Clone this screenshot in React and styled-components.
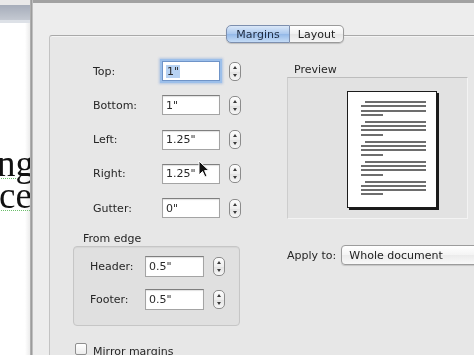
import React from "react";
import styled, { createGlobalStyle, css } from "styled-components";

const Global = createGlobalStyle`
  html, body { margin: 0; padding: 0; background: #ececec; }
  body { overflow: hidden; }
  * { box-sizing: border-box; }
`;

const Screen = styled.div`
  display: flex;
  width: 474px;
  height: 355px;
  overflow: hidden;
  font-family: "DejaVu Sans", "Liberation Sans", sans-serif;
  font-size: 11px;
  color: #262626;
  filter: blur(0.3px);
`;

const DocStrip = styled.div`
  width: 30px;
  flex: none;
  display: flex;
  flex-direction: column;
  background: #fff;
  overflow: hidden;
`;

const DocTop = styled.div`
  height: 5px;
  background: #e9e9e9;
`;

const DocToolbar = styled.div`
  height: 18px;
  background: linear-gradient(#a6adba, #c4c9d2);
  border-bottom: 3px solid #dde1e7;
`;

const DocBody = styled.div`
  flex: 1;
  padding-top: 125px;
  background: linear-gradient(to right, #fff 0, #fff 25px, #ececec 30px);
  font-family: "Liberation Serif", "Times New Roman", serif;
  font-size: 37px;
  line-height: 32px;
  color: #111;
`;

const DocLine = styled.div`
  white-space: nowrap;
  margin-left: ${(p) => p.$shift}px;
  span {
    text-decoration: underline dotted #6cbf6c;
    text-decoration-thickness: 1px;
    text-underline-offset: 2px;
  }
`;

const WindowEdge = styled.div`
  width: 3px;
  flex: none;
  background: linear-gradient(to right, #b9b9b9, #9c9c9c, #d2d2d2);
`;

const Dialog = styled.div`
  flex: 1;
  position: relative;
  background: #ededed;
  border-top: 3px solid #a2a2a2;
  padding: 32px 0 0 16px;
  overflow: hidden;
`;

const Panel = styled.div`
  position: relative;
  width: 470px;
  height: 340px;
  background: #e7e7e7;
  border: 1px solid #c3c3c3;
  border-top-color: #a9a9a9;
  border-radius: 3px;
  box-shadow: inset 0 1px 0 #f4f4f4;
`;

const TabBar = styled.div`
  position: absolute;
  top: -11px;
  left: 176px;
  display: flex;
  height: 18px;
  border-radius: 5px;
  box-shadow: 0 1px 1px rgba(0, 0, 0, 0.18);
`;

const Tab = styled.div`
  width: ${(p) => p.$w}px;
  display: flex;
  align-items: center;
  justify-content: center;
  font-size: 11px;
  border: 1px solid #9a9a9a;
  ${(p) =>
    p.$active
      ? css`
          background: linear-gradient(#dbe8f8, #a9c7ee 50%, #93b8e8 51%, #c5dcf6);
          border-color: #7d8fae;
          border-radius: 5px 0 0 5px;
          color: #1d2a40;
        `
      : css`
          background: linear-gradient(#ffffff, #f1f1f1 50%, #e6e6e6 51%, #f6f6f6);
          border-left: none;
          border-radius: 0 5px 5px 0;
          color: #222;
        `}
`;

const Columns = styled.div`
  display: flex;
`;

const LeftCol = styled.div`
  width: 237px;
  flex: none;
  padding: 25px 0 0 23px;
  display: flex;
  flex-direction: column;
`;

const FieldGrid = styled.div`
  display: grid;
  grid-template-columns: ${(p) => p.$cols};
  grid-auto-rows: ${(p) => p.$rowH}px;
  column-gap: 9px;
  row-gap: ${(p) => p.$gap}px;
  align-items: center;
  margin-left: ${(p) => p.$indent || 0}px;
`;

const Label = styled.div`
  white-space: nowrap;
  color: #262626;
`;

const Input = styled.div`
  height: 100%;
  display: flex;
  align-items: center;
  padding-left: 3px;
  background: #fff;
  border: 1px solid #a4a4a4;
  border-top-color: #7f7f7f;
  box-shadow: inset 0 1px 1px rgba(0, 0, 0, 0.12);
  color: #2a2a2a;
  ${(p) =>
    p.$focused &&
    css`
      border-color: #6f94c8;
      box-shadow: 0 0 0 2px #9cbfea, 0 0 2px 3px rgba(120, 160, 220, 0.45);
    `}
`;

const Selected = styled.span`
  background: #b7d2f2;
  padding: 0 1px;
`;

const StepperBox = styled.div`
  width: 12px;
  height: 19px;
  border: 1px solid #8c8c8c;
  border-radius: 5px;
  background: linear-gradient(#fdfdfd, #eeeeee 50%, #e2e2e2 51%, #f6f6f6);
  display: flex;
  align-items: center;
  justify-content: center;
  align-self: center;
`;

function Stepper() {
  return (
    <StepperBox>
      <svg width="10" height="17" viewBox="0 0 10 17">
        <path d="M5 3 L7 6 L3 6 Z" fill="#3a3a3a" />
        <path d="M5 14 L7 11 L3 11 Z" fill="#3a3a3a" />
      </svg>
    </StepperBox>
  );
}

const GroupTitle = styled.div`
  margin: 14px 0 1px 10px;
  line-height: 13px;
`;

const GroupBox = styled.div`
  width: 167px;
  height: 80px;
  padding: 9px 0 0 16px;
  background: #e0e0e0;
  border: 1px solid #c6c6c6;
  border-radius: 4px;
  box-shadow: inset 0 1px 1px rgba(0, 0, 0, 0.05);
`;

const CheckRow = styled.div`
  display: flex;
  align-items: flex-start;
  gap: 6px;
  margin: 17px 0 0 2px;
`;

const CheckBox = styled.div`
  width: 12px;
  height: 12px;
  border: 1px solid #8f8f8f;
  border-radius: 2px;
  background: linear-gradient(#ffffff, #ececec);
`;

const CheckText = styled.div`
  line-height: 13px;
  margin-top: 2px;
`;

const RightCol = styled.div`
  flex: 1;
  display: flex;
  flex-direction: column;
  align-items: flex-start;
  padding-top: 27px;
`;

const SectionLabel = styled.div`
  line-height: 13px;
  padding-left: 7px;
  margin-bottom: 1px;
`;

const PreviewBox = styled.div`
  width: 181px;
  height: 142px;
  padding: 13px 0 0 59px;
  background: #e2e2e2;
  border: 1px solid #cdcdcd;
  border-top-color: #bdbdbd;
  border-right-color: #f3f3f3;
  border-bottom-color: #f3f3f3;
`;

const Page = styled.div`
  width: 90px;
  height: 117px;
  background: #fff;
  border: 1px solid #1c1c1c;
  box-shadow: 2px 2px 0 #1a1a1a;
  padding: 9px 0 0 13px;
  display: flex;
  flex-direction: column;
  gap: 5px;
`;

const Para = styled.div`
  display: flex;
  flex-direction: column;
  gap: 2.3px;
`;

const TextLine = styled.div`
  height: 2px;
  background: #6d6d6d;
  width: ${(p) => p.$w}px;
  margin-left: ${(p) => p.$indent || 0}px;
`;

const ApplyRow = styled.div`
  display: flex;
  align-items: center;
  gap: 5px;
  margin-top: 26px;
`;

const Dropdown = styled.div`
  width: 180px;
  height: 20px;
  display: flex;
  align-items: center;
  padding-left: 7px;
  background: linear-gradient(#ffffff, #f4f4f4 50%, #ebebeb 51%, #f8f8f8);
  border: 1px solid #9c9c9c;
  border-radius: 4px;
  box-shadow: 0 1px 1px rgba(0, 0, 0, 0.15);
  color: #222;
`;

const Cursor = styled.svg`
  position: absolute;
  left: 165px;
  top: 157px;
`;

const marginRows = [
  { label: "Top:", value: '1"', focused: true },
  { label: "Bottom:", value: '1"' },
  { label: "Left:", value: '1.25"' },
  { label: "Right:", value: '1.25"' },
  { label: "Gutter:", value: '0"' },
];

const edgeRows = [
  { label: "Header:", value: '0.5"' },
  { label: "Footer:", value: '0.5"' },
];

export default function App() {
  return (
    <>
      <Global />
      <Screen>
        <DocStrip>
          <DocTop />
          <DocToolbar />
          <DocBody>
            <DocLine $shift={-3}>
              <span>ngc</span>
            </DocLine>
            <DocLine $shift={-1}>
              <span>cep</span>
            </DocLine>
          </DocBody>
        </DocStrip>
        <WindowEdge />
        <Dialog>
          <Panel>
            <TabBar>
              <Tab $active $w={64}>Margins</Tab>
              <Tab $w={54}>Layout</Tab>
            </TabBar>
            <Columns>
              <LeftCol>
                <FieldGrid $cols="60px 58px 12px" $rowH={20} $gap={14.25} $indent={20}>
                  {marginRows.map((r) => (
                    <React.Fragment key={r.label}>
                      <Label>{r.label}</Label>
                      <Input $focused={r.focused}>
                        {r.focused ? <Selected>{r.value}</Selected> : r.value}
                      </Input>
                      <Stepper />
                    </React.Fragment>
                  ))}
                </FieldGrid>
                <GroupTitle>From edge</GroupTitle>
                <GroupBox>
                  <FieldGrid $cols="46px 59px 12px" $rowH={21} $gap={12}>
                    {edgeRows.map((r) => (
                      <React.Fragment key={r.label}>
                        <Label>{r.label}</Label>
                        <Input>{r.value}</Input>
                        <Stepper />
                      </React.Fragment>
                    ))}
                  </FieldGrid>
                </GroupBox>
                <CheckRow>
                  <CheckBox />
                  <CheckText>Mirror margins</CheckText>
                </CheckRow>
              </LeftCol>
              <RightCol>
                <SectionLabel>Preview</SectionLabel>
                <PreviewBox>
                  <Page>
                    {[0, 1, 2, 3, 4].map((i) => (
                      <Para key={i}>
                        <TextLine $indent={4} $w={61} />
                        <TextLine $w={65} />
                        <TextLine $w={65} />
                        <TextLine $w={22} />
                      </Para>
                    ))}
                  </Page>
                </PreviewBox>
                <ApplyRow>
                  <Label>Apply to:</Label>
                  <Dropdown>Whole document</Dropdown>
                </ApplyRow>
              </RightCol>
            </Columns>
          </Panel>
          <Cursor width="12" height="19" viewBox="0 0 12 19">
            <path
              d="M1 1 L1 15 L4.5 11.5 L7 17 L9 16 L6.6 10.6 L11 10.6 Z"
              fill="#111"
              stroke="#fff"
              strokeWidth="1"
              strokeLinejoin="round"
            />
          </Cursor>
        </Dialog>
      </Screen>
    </>
  );
}
